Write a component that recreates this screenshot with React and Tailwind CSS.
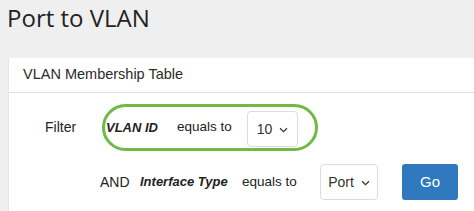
import React from 'react';

// Port to VLAN page: filter card with VLAN ID / Interface Type selectors

const Chevron = () => (
    <svg width="9" height="6" viewBox="0 0 9 6" className="ml-[7px] mt-[1px]">
        <path d="M1 1.2 L4.5 4.6 L8 1.2" fill="none" stroke="#333" strokeWidth="1.2" />
    </svg>
);

const FakeSelect = ({ value, width }) => (
    <div className={`${width} h-[36px] flex items-center justify-center border border-[#dcdcdc] rounded-[4px] bg-white text-[14px] text-[#333]`}>
        <span>{value}</span>
        <Chevron />
    </div>
);

const App = () => (
    <div className="w-[474px] h-[211px] overflow-hidden bg-[#efefef] text-[#222]" style={{ fontFamily: '"Liberation Sans", Arial, sans-serif' }}>
        {/* Page title */}
        <div className="h-[58px] pl-[7px] pt-[2px]">
            <h1 className="text-[24px] leading-[32px] text-[#222]" style={{ fontFamily: '"Open Sans", sans-serif' }}>
                Port to VLAN
            </h1>
        </div>

        {/* Card */}
        <div className="ml-[8px] bg-white h-[153px] border-l border-[#e6e6e6]">
            <div className="h-[35px] flex items-center pl-[14px] border-b border-[#dedede] text-[14.5px] text-[#2a2a2a]">
                VLAN Membership Table
            </div>

            <div className="pt-[11px]">
                {/* Row 1 */}
                <div className="flex items-center pl-[36px]">
                    <span className="text-[14px] w-[57px]">Filter</span>
                    <div className="flex items-center h-[47px] border-[3px] border-[#6dba45] rounded-full pl-[1px] pr-[17px]">
                        <span className="text-[13px] font-bold italic w-[71px]">VLAN ID</span>
                        <span className="text-[13.5px] w-[70px]">equals to</span>
                        <div className="mt-[3px]">
                            <FakeSelect value="10" width="w-[51px]" />
                        </div>
                    </div>
                </div>

                {/* Row 2 */}
                <div className="flex items-center pl-[91px] mt-[13px]">
                    <span className="text-[14px] w-[40px]">AND</span>
                    <span className="text-[13px] font-bold italic w-[102px]">Interface Type</span>
                    <span className="text-[13.5px] w-[78px]">equals to</span>
                    <FakeSelect value="Port" width="w-[58px]" />
                    <button className="ml-[24px] w-[56px] h-[36px] rounded-[3px] bg-[#3079bf] text-white text-[15px]">
                        Go
                    </button>
                </div>
            </div>
        </div>
    </div>
);

export default App;
